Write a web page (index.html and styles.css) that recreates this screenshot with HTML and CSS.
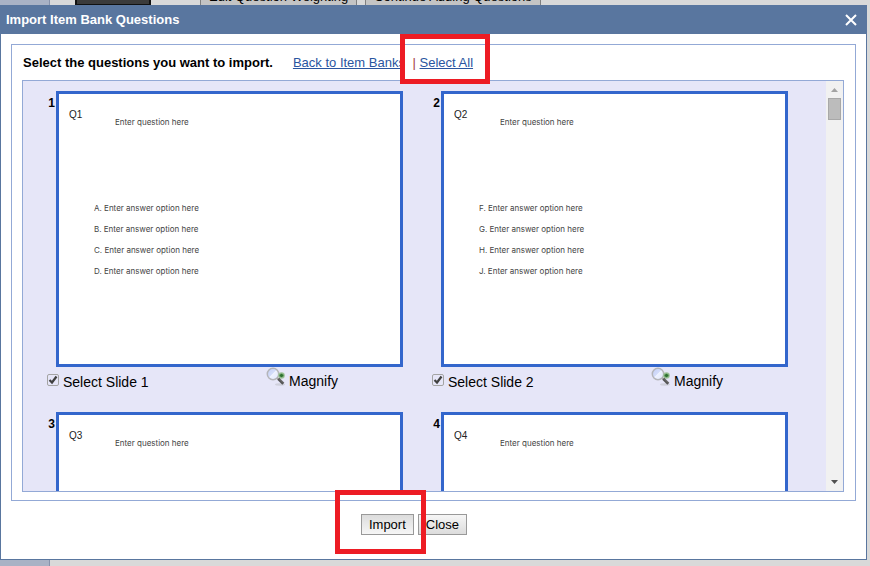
FILE: index.html
```html
<!DOCTYPE html>
<html lang="en">
<head>
<meta charset="utf-8">
<title>Import Item Bank Questions</title>
<link rel="stylesheet" href="styles.css">
</head>
<body>
<svg class="defs" aria-hidden="true">
  <defs>
    <linearGradient id="lens" x1="0" y1="0" x2="1" y2="1">
      <stop offset="0" stop-color="#c3cff5"/><stop offset=".45" stop-color="#d3dcfa"/>
      <stop offset=".5" stop-color="#eef2ff"/><stop offset="1" stop-color="#dfe6fd"/>
    </linearGradient>
    <symbol id="magnifier" viewBox="0 0 20 20">
      <ellipse cx="14" cy="17.5" rx="5" ry="1.2" fill="#cfd0dc"/>
      <circle cx="7" cy="7" r="5.7" fill="url(#lens)" stroke="#b4b5b9" stroke-width="1.5"/>
      <path d="M11 11l2 1.500" stroke="#aaa" stroke-width="2"/>
      <circle cx="15.500" cy="8.500" r="3.300" fill="#9fc39a"/>
      <path d="M13.500 8.500h4M15.500 6.700v3.600" stroke="#2e7330" stroke-width="1.800"/>
      <path d="M12.300 11.800l5 5" stroke="#555" stroke-width="2.800"/>
      <path d="M13.300 11.700l4 4" stroke="#888" stroke-width=".7"/>
    </symbol>
  </defs>
</svg>
<div class="page">
  <div class="sidebar"></div>
  <div class="toolbar">
    <span class="thumb"></span>
    <button type="button" class="tool">Edit Question Weighting</button>
    <button type="button" class="tool">Continue Adding Questions</button>
  </div>
</div>
<main class="dialog" role="dialog" aria-labelledby="title">
  <header class="titlebar">
    <h1 id="title">Import Item Bank Questions</h1>
    <button type="button" class="dismiss" aria-label="Dismiss">
      <svg viewBox="0 0 12 12" width="12" height="12"><path d="M1 1l10 10M11 1L1 11" stroke="#fff" stroke-width="2"/></svg>
    </button>
  </header>
  <section class="panel">
    <div class="intro">
      <strong>Select the questions you want to import.</strong>
      <nav><a href="#">Back to Item Banks</a> <span class="bar">|</span> <span class="marked marked-link"><a href="#">Select All</a></span></nav>
    </div>
    <div class="viewport">
      <div class="slides">
        <article class="item">
          <b class="number">1</b>
          <div class="slide"><span class="code">Q1</span><p class="question">Enter question here</p>
            <ul><li>A. Enter answer option here</li><li>B. Enter answer option here</li><li>C. Enter answer option here</li><li>D. Enter answer option here</li></ul></div>
          <div class="controls"><label><input type="checkbox" checked>Select Slide 1</label>
            <button type="button" class="magnify"><svg width="20" height="20"><use href="#magnifier"/></svg><span>Magnify</span></button></div>
        </article>
        <article class="item">
          <b class="number">2</b>
          <div class="slide"><span class="code">Q2</span><p class="question">Enter question here</p>
            <ul><li>F. Enter answer option here</li><li>G. Enter answer option here</li><li>H. Enter answer option here</li><li>J. Enter answer option here</li></ul></div>
          <div class="controls"><label><input type="checkbox" checked>Select Slide 2</label>
            <button type="button" class="magnify"><svg width="20" height="20"><use href="#magnifier"/></svg><span>Magnify</span></button></div>
        </article>
        <article class="item">
          <b class="number">3</b>
          <div class="slide"><span class="code">Q3</span><p class="question">Enter question here</p></div>
        </article>
        <article class="item">
          <b class="number">4</b>
          <div class="slide"><span class="code">Q4</span><p class="question">Enter question here</p></div>
        </article>
      </div>
      <div class="scrollbar" aria-hidden="true">
        <svg width="7" height="4" viewBox="0 0 7 4"><path d="M0 4L3.500 0L7 4z" fill="#a3a3a3"/></svg>
        <span class="grip"></span>
        <svg width="7" height="4" viewBox="0 0 7 4"><path d="M0 0L3.500 4L7 0z" fill="#505050"/></svg>
      </div>
    </div>
  </section>
  <footer class="actions">
    <span class="marked marked-button"><button type="button" class="push pressed">Import</button></span>
    <button type="button" class="push">Close</button>
  </footer>
</main>
</body>
</html>
```

FILE: styles.css
```css
* { box-sizing: border-box; }
body {
  margin: 0;
  padding: 5px 3px 6px 0;
  height: 100vh;
  display: flex;
  overflow: hidden;
  background: #d9d9d9;
  color: #000;
  font: 13px/16px "Liberation Sans", Arial, sans-serif;
}
.defs { position: absolute; width: 0; height: 0; }
button { font: inherit; color: inherit; cursor: pointer; }
a { color: #2a55a0; }

.page { position: absolute; inset: 0; display: flex; }
.sidebar { width: 50px; background: #a9b2c5; border-right: 1px solid #8792ab; }
.toolbar {
  flex: 1;
  height: 6px;
  overflow: hidden;
  display: flex;
  align-items: flex-end;
  gap: 8px;
  padding-left: 25px;
}
.thumb { width: 76px; height: 24px; margin-right: 41px; background: #3b3b3b; border: 2px solid #111; }
.tool {
  flex: none;
  height: 22px;
  padding: 4px 8px 0;
  white-space: nowrap;
  line-height: 16px;
  background: #c4c4c4;
  border: 1px solid #808080;
}

.dialog {
  position: relative;
  flex: 1;
  min-width: 0;
  display: flex;
  flex-direction: column;
  background: #fff;
  border: 1px solid #59769f;
}
.titlebar {
  flex: none;
  height: 28px;
  display: flex;
  align-items: center;
  justify-content: space-between;
  padding: 0 8px 0 5px;
  background: #59769f;
  color: #fff;
}
.titlebar h1 { margin: 0; font-size: 13px; }
.dismiss { display: flex; padding: 1px; border: 0; background: none; }

.panel {
  flex: 1;
  min-height: 0;
  display: flex;
  flex-direction: column;
  margin: 10px 10px 0;
  padding: 0 11px 8px 10px;
  border: 1px solid #93a9d6;
}
.intro { flex: none; display: flex; align-items: center; gap: 20px; height: 35px; padding-left: 1px; }
.bar { margin-left: 4px; color: #a33c3c; }
.marked { position: relative; display: inline-block; }
.marked::after {
  content: "";
  position: absolute;
  z-index: 2;
  border: 5px solid #ed1c24;
  pointer-events: none;
}
.marked-link::after { inset: -21px -17px -13px -20px; }
.marked-button::after { inset: -24px -12px -19px -26px; }

.viewport {
  flex: 1;
  min-height: 0;
  display: flex;
  overflow: hidden;
  background: #e6e6f8;
  border: 1px solid #93a9d6;
}
.slides {
  flex: 1;
  display: grid;
  grid-template-columns: 1fr 1fr;
  grid-auto-rows: 321px;
  column-gap: 29px;
  padding: 10px 38px 0 24px;
}
.item { display: grid; grid-template-columns: 9px 1fr; grid-template-rows: 276px auto; }
.number { padding: 4px 1px 0 0; font-size: 12px; text-align: right; }
.slide {
  display: grid;
  grid-template-columns: 46px 1fr;
  grid-template-rows: 94px 1fr;
  padding: 15px 10px 0;
  background: #fff;
  border: 3px solid #3366cc;
  font-family: Inter, "Liberation Sans", sans-serif;
}
.code { font: 10px/12px "Liberation Sans", Arial, sans-serif; color: #222; }
.question { margin: 0; padding-top: 8px; }
.question, .slide li { font-size: 8px; line-height: 11px; color: #444; }
.slide ul {
  grid-column: 1 / -1;
  margin: 0;
  padding: 0 0 0 25px;
  list-style: none;
}
.slide li { margin-bottom: 10px; }
.controls {
  grid-column: 1 / -1;
  display: flex;
  font-size: 14px;
}
.controls label { display: flex; align-items: center; height: 30px; width: 219px; }
.controls input {
  appearance: none;
  width: 12px;
  height: 12px;
  margin: 0 4px 4px 0;
  border: 1px solid #a4a4a4;
  border-radius: 2px;
  background: linear-gradient(#f2f2f2, #dedede);
}
.controls input:checked {
  background-image: url("data:image/svg+xml,%3Csvg xmlns='http://www.w3.org/2000/svg' viewBox='0 0 10 10'%3E%3Cpath d='M1.500 5l2.500 2.500L8.500 1.500' fill='none' stroke='%23404040' stroke-width='2.200'/%3E%3C/svg%3E");
}
.magnify {
  display: flex;
  align-items: flex-start;
  gap: 3px;
  height: 24px;
  padding: 0;
  border: 0;
  background: none;
}
.magnify span { padding-top: 6px; }

.scrollbar {
  width: 17px;
  display: flex;
  flex-direction: column;
  align-items: center;
  padding: 7px 0;
  background: #f1f1f1;
}
.grip { width: 13px; height: 22px; margin: 6px 0 auto; background: #bcbcbc; border: 1px solid #a8a8a8; }

.actions {
  flex: none;
  display: flex;
  justify-content: center;
  gap: 4px;
  padding: 13px 39px 24px 0;
}
.push {
  height: 21px;
  padding: 0 7px;
  background: linear-gradient(#f6f6f6, #dcdcdc);
  border: 1px solid #999;
}
.pressed { background: linear-gradient(#dcdcdc, #f6f6f6); }
.marked-button { display: flex; }
```
